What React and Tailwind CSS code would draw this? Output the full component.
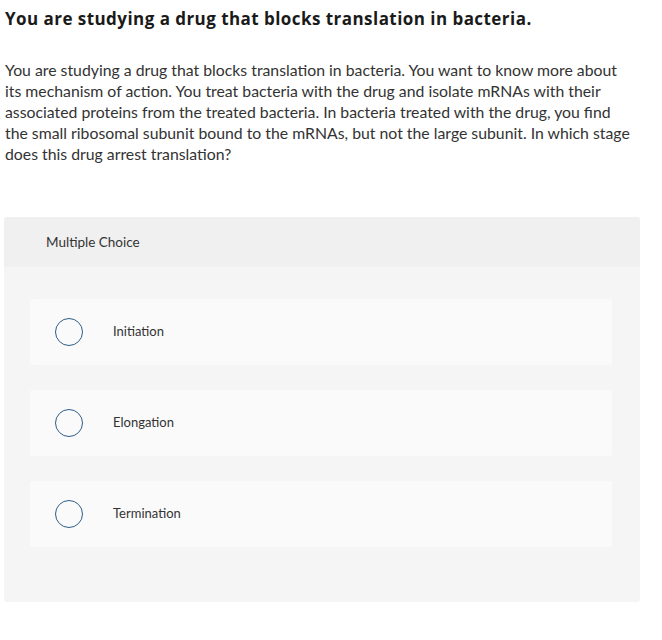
const choices = ["Initiation", "Elongation", "Termination"];

export default function App() {
    return (
        <div className="min-h-screen bg-white text-[#333] font-['Lato','Open_Sans',sans-serif]">
            <div className="px-[5px] pt-[7px]">
                <h1 className="font-['Open_Sans',sans-serif] text-[17px] leading-6 font-bold tracking-[0.45px] text-[#1a1a1a]">
                    You are studying a drug that blocks translation in bacteria.
                </h1>
                <p className="mt-[28px] text-[15.8px] leading-[21px] text-[#333]">
                    You are studying a drug that blocks translation in bacteria. You want to know more about
                    <br />
                    its mechanism of action. You treat bacteria with the drug and isolate mRNAs with their
                    <br />
                    associated proteins from the treated bacteria. In bacteria treated with the drug, you find
                    <br />
                    the small ribosomal subunit bound to the mRNAs, but not the large subunit. In which stage
                    <br />
                    does this drug arrest translation?
                </p>
            </div>

            <div className="ml-[4px] mt-[53px] w-[636px] rounded-[3px] bg-[#f5f5f5] overflow-hidden">
                <div className="h-[50px] flex items-center bg-[#f0f0f0] pl-[42px] text-[13.5px] text-[#333]">
                    Multiple Choice
                </div>
                <div className="pl-[26px] pr-[28px] pt-[32px] pb-[55px] flex flex-col gap-[25px]">
                    {choices.map((c) => (
                        <div key={c} className="h-[66px] rounded-[3px] bg-[#fafafa] flex items-center pl-[25px]">
                            <span className="w-[28px] h-[28px] rounded-full border-[1.5px] border-[#2f5d8a] shrink-0" />
                            <span className="ml-[30px] text-[13px] text-[#333]">{c}</span>
                        </div>
                    ))}
                </div>
            </div>
        </div>
    );
}
